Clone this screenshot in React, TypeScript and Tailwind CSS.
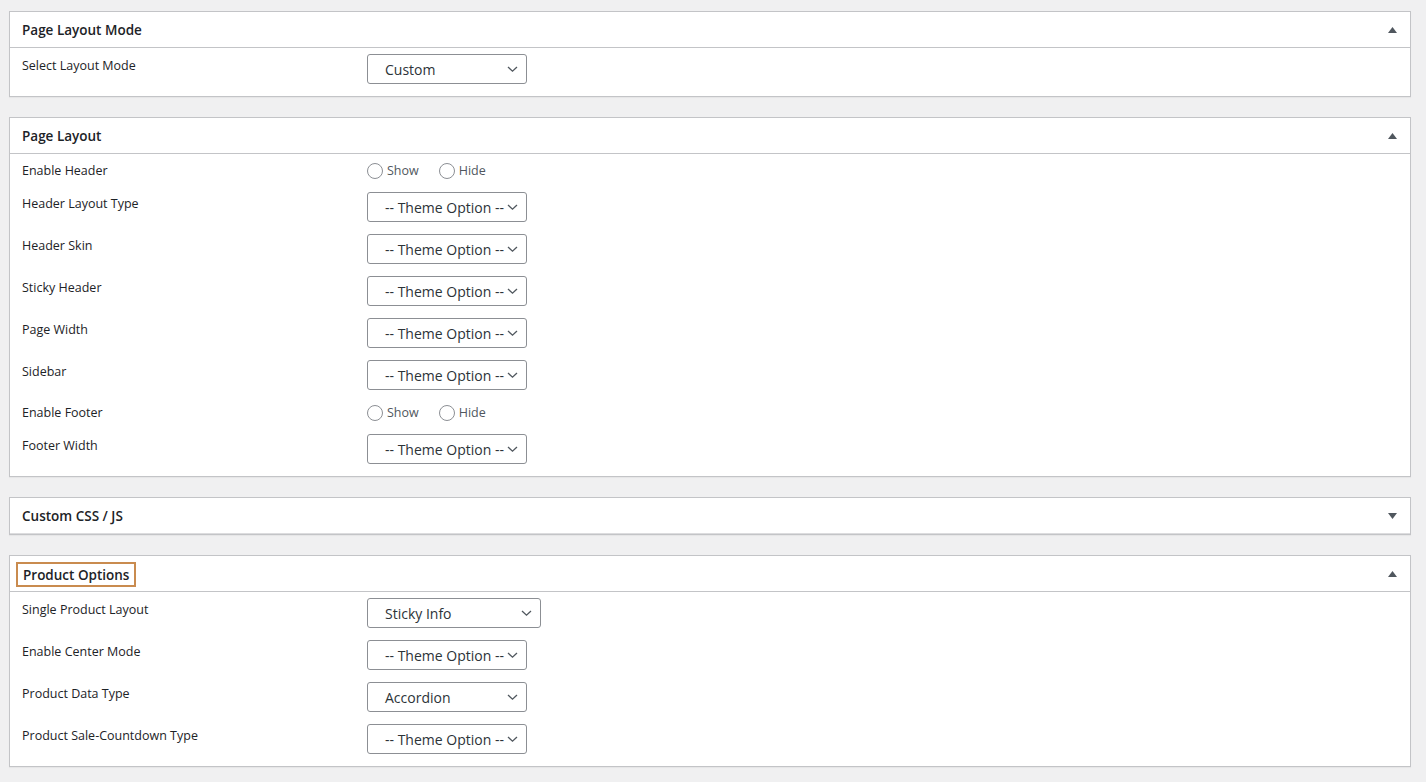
import React from 'react';

type Row =
  | { kind: 'select'; label: string; value: string; width?: string }
  | { kind: 'radio'; label: string };

interface PanelProps {
  title: string;
  open?: boolean;
  highlight?: boolean;
  rows?: Row[];
}

const font = { fontFamily: '"Open Sans", "Noto Sans", sans-serif' };

const Chevron = () => (
  <svg width="11" height="10" viewBox="0 0 11 10" className="shrink-0">
    <path d="M1 3 L5.5 7.2 L10 3" fill="none" stroke="#50575e" strokeWidth="1.3" />
  </svg>
);

const FakeSelect: React.FC<{ value: string; width?: string }> = ({ value, width = 'w-[160px]' }) => (
  <div
    className={`${width} h-[30px] flex items-center justify-between pl-[17px] pr-[8px] border border-[#8c8f94] rounded-[3px] bg-white text-[14px] text-[#2c3338]`}
  >
    <span className="whitespace-nowrap">{value}</span>
    <Chevron />
  </div>
);

const Radio: React.FC<{ label: string }> = ({ label }) => (
  <label className="flex items-center gap-[4px] text-[12.5px] leading-[18px] text-[#50575e]">
    <span className="w-[16px] h-[16px] rounded-full border border-[#8c8f94] bg-white" />
    {label}
  </label>
);

const Toggle: React.FC<{ open: boolean }> = ({ open }) => (
  <svg width="9" height="6" viewBox="0 0 9 6">
    {open ? <path d="M0 6 L4.5 0 L9 6 Z" fill="#50575e" /> : <path d="M0 0 L4.5 6 L9 0 Z" fill="#50575e" />}
  </svg>
);

const Panel: React.FC<PanelProps> = ({ title, open = true, highlight, rows = [] }) => (
  <div className="bg-white border border-[#c3c4c7] shadow-[0_1px_1px_rgba(0,0,0,0.04)] mb-[20px]">
    <div
      className={`flex items-center justify-between pl-[12px] pr-[13px] pt-[1px] ${
        open ? 'h-[36px] border-b border-[#c3c4c7]' : 'h-[36px] border-b border-[#dcdcde]'
      }`}
    >
      <h2
        className={`text-[13.5px] font-semibold text-[#1d2327] leading-[18px] ${
          highlight ? '-ml-[6px] px-[5px] pt-[2px] pb-[1px] border-2 border-[#c98b4f]' : ''
        }`}
      >
        {title}
      </h2>
      <Toggle open={open} />
    </div>
    {open && (
      <div className="flex flex-col gap-[12px] pt-[6px] pb-[12px] pl-[12px]">
        {rows.map((r) =>
          r.kind === 'select' ? (
            <div key={r.label} className="flex items-start">
              <div className="w-[345px] pt-[3px] text-[12.5px] leading-[18px] text-[#1d2327]">{r.label}</div>
              <FakeSelect value={r.value} width={r.width} />
            </div>
          ) : (
            <div key={r.label} className="flex items-start h-[20px] pt-[2px]">
              <div className="w-[345px] text-[12.5px] leading-[18px] text-[#1d2327]">{r.label}</div>
              <div className="flex items-center gap-[20px]">
                <Radio label="Show" />
                <Radio label="Hide" />
              </div>
            </div>
          )
        )}
      </div>
    )}
  </div>
);

const THEME = '-- Theme Option --';

export default function App() {
  return (
    <div className="min-h-screen bg-[#f0f0f1] pl-[9px] pr-[15px] pt-[11px] pb-[1px]" style={font}>
      <Panel title="Page Layout Mode" rows={[{ kind: 'select', label: 'Select Layout Mode', value: 'Custom' }]} />
      <Panel
        title="Page Layout"
        rows={[
          { kind: 'radio', label: 'Enable Header' },
          { kind: 'select', label: 'Header Layout Type', value: THEME },
          { kind: 'select', label: 'Header Skin', value: THEME },
          { kind: 'select', label: 'Sticky Header', value: THEME },
          { kind: 'select', label: 'Page Width', value: THEME },
          { kind: 'select', label: 'Sidebar', value: THEME },
          { kind: 'radio', label: 'Enable Footer' },
          { kind: 'select', label: 'Footer Width', value: THEME },
        ]}
      />
      <Panel title="Custom CSS / JS" open={false} />
      <Panel
        title="Product Options"
        highlight
        rows={[
          { kind: 'select', label: 'Single Product Layout', value: 'Sticky Info', width: 'w-[174px]' },
          { kind: 'select', label: 'Enable Center Mode', value: THEME },
          { kind: 'select', label: 'Product Data Type', value: 'Accordion' },
          { kind: 'select', label: 'Product Sale-Countdown Type', value: THEME },
        ]}
      />
    </div>
  );
}
